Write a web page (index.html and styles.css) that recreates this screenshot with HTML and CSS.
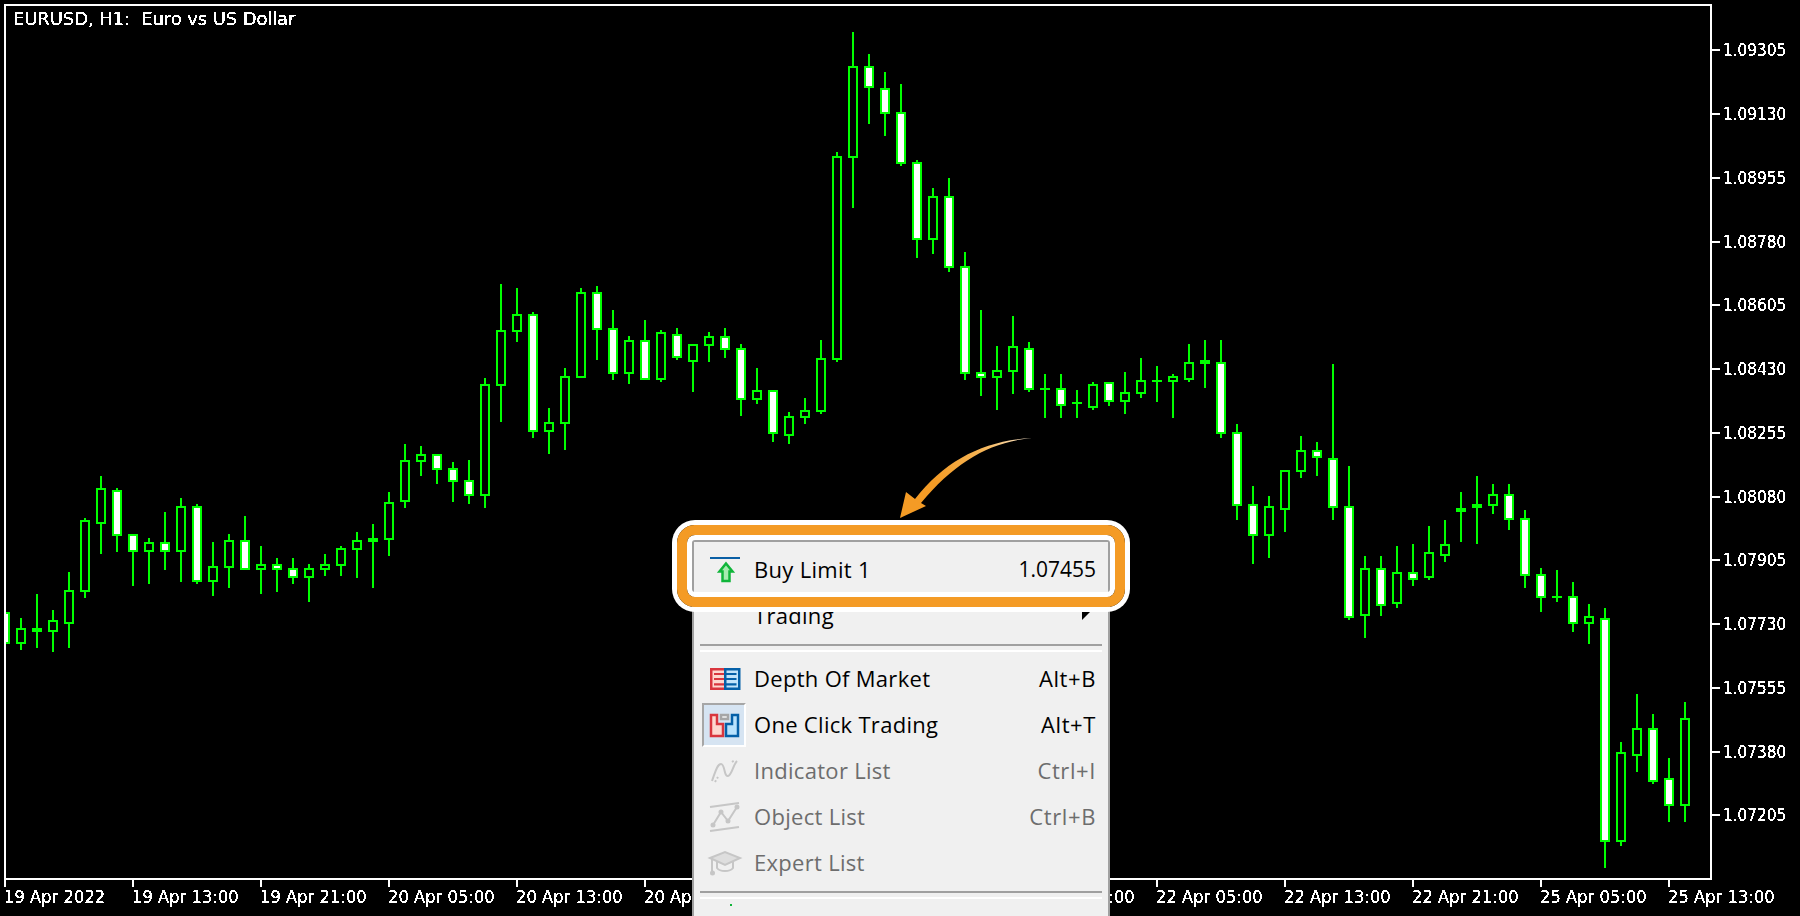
FILE: index.html
```html
<!DOCTYPE html>
<html lang="en">
<head>
<meta charset="utf-8">
<title>EURUSD, H1</title>
<link rel="stylesheet" href="styles.css">
</head>
<body>
<svg class="defs" width="0" height="0" aria-hidden="true">
  <filter id="bitmap-text" color-interpolation-filters="sRGB" x="0" y="0" width="100%" height="100%">
    <feComponentTransfer>
      <feFuncA type="discrete" tableValues="0 1 1"/>
    </feComponentTransfer>
  </filter>
</svg>
<main class="terminal">
  <section class="plot">
    <svg class="candles" id="candles" viewBox="6 6 1704 872" width="1704" height="872" shape-rendering="crispEdges"></svg>
    <h1 class="chart-title">EURUSD, H1:  Euro vs US Dollar</h1>
  </section>
  <ul class="price-axis">
    <li>1.09305</li><li>1.09130</li><li>1.08955</li><li>1.08780</li><li>1.08605</li><li>1.08430</li><li>1.08255</li>
    <li>1.08080</li><li>1.07905</li><li>1.07730</li><li>1.07555</li><li>1.07380</li><li>1.07205</li>
  </ul>
  <ul class="time-axis">
    <li>19 Apr 2022</li><li>19 Apr 13:00</li><li>19 Apr 21:00</li><li>20 Apr 05:00</li><li>20 Apr 13:00</li><li>20 Apr 21:00</li><li>21 Apr 05:00</li>
    <li>21 Apr 13:00</li><li>21 Apr 21:00</li><li>22 Apr 05:00</li><li>22 Apr 13:00</li><li>22 Apr 21:00</li><li>25 Apr 05:00</li><li>25 Apr 13:00</li>
  </ul>
</main>

<nav class="menu">
  <div class="row">
    <span class="icon"><svg viewBox="0 0 44 44"><rect x="8" y="9" width="30" height="2" fill="#0a5fa5"/><path d="M24 15.500 30.500 23.500H27.500V33H20.500V23.500H17.500Z" fill="#a6ecb0" stroke="#10b53a" stroke-width="2.500"/></svg></span>
    <span class="label">Buy Limit 1</span><span class="hint hint-price">1.07455</span>
  </div>
  <div class="row">
    <span class="icon"></span>
    <span class="label">Trading</span><span class="submenu-arrow"></span>
  </div>
  <div class="separator"></div>
  <div class="row">
    <span class="icon"><svg viewBox="0 0 44 44"><rect x="9.250" y="12.250" width="14" height="19.500" fill="#fdd8d0" stroke="#d9363e" stroke-width="2.500"/><rect x="23.250" y="12.250" width="14" height="19.500" fill="#c2e4fb" stroke="#0560a8" stroke-width="2.500"/><path d="M12 17H22M12 22H22M12 27.300H22" stroke="#d9363e" stroke-width="2.200"/><path d="M24 17H34.500M24 22H34.500M24 27.300H34.500" stroke="#0560a8" stroke-width="2.200"/></svg></span>
    <span class="label">Depth Of Market</span><span class="hint">Alt+B</span>
  </div>
  <div class="row">
    <span class="icon icon-active"><svg viewBox="0 0 44 44"><path d="M9 12H15V21H21V33H9Z" fill="#fdd8d0" stroke="#d9363e" stroke-width="2.500"/><path d="M36 12H30V21H24V33H36Z" fill="#b8e2fd" stroke="#0560a8" stroke-width="2.500"/><rect x="19" y="12" width="7" height="4" fill="#f2f2f2" stroke="#a6a6a6" stroke-width="2.500"/></svg></span>
    <span class="label">One Click Trading</span><span class="hint">Alt+T</span>
  </div>
  <div class="row row-disabled">
    <span class="icon"><svg viewBox="0 0 44 44" fill="none" stroke="#c6c6c6" stroke-width="2"><path d="M10 32C13 24 15 15 19 15S22 28 26 27 31 16 35 12"/><path d="M13 33 16 28M30 13 33 11" stroke-dasharray="2 2"/></svg></span>
    <span class="label">Indicator List</span><span class="hint">Ctrl+I</span>
  </div>
  <div class="row row-disabled">
    <span class="icon"><svg viewBox="0 0 44 44" fill="#c6c6c6" stroke="#c6c6c6" stroke-width="2"><path d="M8 12 37 8M8 36 37 32" fill="none"/><path d="M11 30 19 17 26 26 35 12" fill="none"/><circle cx="11" cy="30" r="1.500"/><circle cx="19" cy="17" r="1.500"/><circle cx="26" cy="26" r="1.500"/><circle cx="35" cy="12" r="1.500"/></svg></span>
    <span class="label">Object List</span><span class="hint">Ctrl+B</span>
  </div>
  <div class="row row-disabled">
    <span class="icon"><svg viewBox="0 0 44 44" fill="none" stroke="#c6c6c6" stroke-width="2"><path d="M8 17 23 11 38 17 23 24Z" fill="#dedede"/><path d="M15 21V27C18 31 28 31 31 27V21M10 17V30"/><circle cx="10.500" cy="32" r="1.500" fill="#c6c6c6"/></svg></span>
    <span class="label">Expert List</span>
  </div>
  <div class="separator"></div>
  <div class="row">
    <span class="icon"><svg viewBox="0 0 44 44"><rect x="28" y="0" width="2" height="2" fill="#10b53a"/></svg></span>
  </div>
</nav>

<div class="callout"></div>

<svg class="pointer" viewBox="0 0 140 90" width="140" height="90">
  <defs>
    <linearGradient id="pointer-fade" gradientUnits="userSpaceOnUse" x1="132" y1="8" x2="40" y2="60">
      <stop offset="0" stop-color="#fbe9d2"/>
      <stop offset="0.45" stop-color="#f6b658"/>
      <stop offset="1" stop-color="#f49b25"/>
    </linearGradient>
  </defs>
  <path d="M0 88 6 62 15 69C45 30 85 10 132 8 90 12 55 32 21 73L26 76Z" fill="url(#pointer-fade)"/>
</svg>

<script src="chart.js"></script>
</body>
</html>
```

FILE: styles.css
```css
* { box-sizing: border-box; }

html, body {
  margin: 0;
  height: 916px;
  overflow: hidden;
  background: #000;
}

body { position: relative; }

.defs { position: absolute; }

.terminal {
  display: grid;
  grid-template-columns: 1708px 88px;
  grid-template-rows: 876px 36px;
  padding: 4px 0 0 4px;
  color: #fff;
  font-family: "DejaVu Sans", sans-serif;
  font-size: 17px;
  font-stretch: condensed;
}

.plot {
  position: relative;
  border: 2px solid #fff;
  overflow: hidden;
}

.candles { display: block; }

.chart-title {
  position: absolute;
  left: 7px;
  top: 2px;
  margin: 0;
  font: inherit;
  font-size: 18px;
  font-stretch: normal;
  letter-spacing: -0.1px;
  line-height: 22px;
  white-space: pre;
  filter: url(#bitmap-text);
}

.price-axis, .time-axis {
  list-style: none;
  margin: 0;
  padding: 0;
}

.price-axis {
  display: grid;
  grid-auto-rows: 63.75px;
  padding-top: 14.5px;
  filter: url(#bitmap-text);
}

.price-axis li {
  display: flex;
  align-items: center;
  gap: 3px;
}

.price-axis li::before {
  content: "";
  flex: none;
  width: 8px;
  height: 2px;
  background: #fff;
}

.time-axis {
  grid-column: 1 / -1;
  display: flex;
  font-size: 18px;
  letter-spacing: 0.1px;
  filter: url(#bitmap-text);
}

.time-axis li {
  flex: 0 0 128px;
  white-space: nowrap;
  line-height: 18px;
}

.time-axis li::before {
  content: "";
  display: block;
  width: 2px;
  height: 7px;
  margin-bottom: 1px;
  background: #fff;
}

.menu {
  position: absolute;
  left: 692px;
  top: 540px;
  width: 418px;
  height: 400px;
  padding: 5px 12px 0 8px;
  background: #f0f0f0;
  border: 2px solid #a0a0a0;
  color: #000;
  font-family: "Open Sans", sans-serif;
  font-size: 22px;
  letter-spacing: 0.3px;
}

.row {
  display: flex;
  align-items: center;
  height: 46px;
}

.row-disabled { color: #6d6d6d; }

.icon {
  flex: none;
  width: 44px;
  height: 44px;
  margin-right: 8px;
}

.icon svg {
  display: block;
  width: 44px;
  height: 44px;
}

.icon-active {
  background: #d6e4f2;
  border-style: solid;
  border-width: 2px;
  border-color: #a6a6a6 #fff #fff #a6a6a6;
}

.icon-active svg {
  margin: -2px;
}

.label {
  flex: 1;
  padding-bottom: 2px;
}

.hint {
  padding-bottom: 2px;
  letter-spacing: 0.6px;
}

.hint-price {
  font-size: 21px;
  letter-spacing: 0;
}

.submenu-arrow {
  width: 0;
  height: 0;
  margin: 0 6px 8px 0;
  border-left: 8px solid #000;
  border-top: 8px solid transparent;
  border-bottom: 8px solid transparent;
}

.separator {
  height: 17px;
  margin: 0 -6px 0 -2px;
  padding-top: 5px;
}

.separator::before {
  content: "";
  display: block;
  height: 4px;
  border-top: 2px solid #a0a0a0;
  border-bottom: 2px solid #fff;
}

.callout {
  position: absolute;
  left: 677px;
  top: 525px;
  width: 448px;
  height: 82px;
  border: 10px solid #f49b25;
  border-radius: 18px;
  box-shadow: 0 0 0 5px #fff, inset 0 0 0 5px #fff;
}

.pointer {
  position: absolute;
  left: 900px;
  top: 430px;
}
```

FILE: chart.js
```js
// [high, body top, body bottom, low, filled]
var bars = [
[612,612,644,644,1],[618,628,644,650,0],[594,628,632,648,0],[610,620,632,652,0],[572,590,624,648,0],[518,520,592,598,0],
[476,488,524,554,0],[488,490,536,552,1],[534,534,552,586,1],[538,542,552,584,0],[512,542,552,570,1],[498,506,552,582,0],
[504,506,582,584,1],[542,566,582,596,0],[534,540,568,588,0],[516,540,570,570,1],[546,564,570,594,0],[558,564,570,592,1],
[558,568,578,584,1],[564,568,578,602,0],[554,564,570,576,0],[546,548,566,576,0],[532,540,550,578,0],[524,538,542,588,0],
[492,502,540,556,0],[444,460,502,508,0],[446,454,462,476,0],[454,454,470,484,1],[462,468,482,502,1],[460,480,496,504,1],
[378,384,496,508,0],[284,330,386,422,0],[288,314,332,342,0],[312,314,432,438,1],[408,422,432,454,0],[368,376,424,450,0],
[288,292,378,378,0],[286,292,330,360,1],[310,328,374,380,1],[336,340,374,384,0],[320,340,380,380,1],[330,332,380,382,0],
[328,334,358,360,1],[344,344,362,392,0],[332,336,346,362,0],[328,336,350,358,1],[344,348,400,416,1],[368,390,400,404,0],
[390,390,434,442,1],[412,416,436,444,0],[398,410,418,424,0],[340,358,412,414,0],[152,156,360,362,0],[32,66,158,208,0],
[54,66,88,124,1],[72,88,114,136,1],[84,112,164,166,1],[160,162,240,258,1],[188,196,240,254,0],[178,196,268,272,1],
[252,266,374,380,1],[310,372,378,396,1],[346,370,378,410,0],[316,346,372,394,0],[342,348,390,392,1],[374,388,390,418,0],
[374,388,406,418,1],[390,402,404,418,0],[382,384,408,410,0],[382,382,402,406,1],[372,392,402,414,0],[358,380,394,398,0],
[366,380,382,402,0],[374,376,382,418,0],[344,362,380,382,0],[340,360,364,388,0],[340,362,434,438,1],[424,432,506,520,1],
[486,504,536,564,1],[496,506,536,558,0],[470,470,510,532,0],[436,450,472,478,0],[442,450,458,476,1],[364,458,508,520,1],
[466,506,618,620,1],[556,568,616,638,0],[556,568,606,616,1],[546,572,604,608,0],[544,572,580,586,1],[526,552,578,580,0],
[520,544,556,562,0],[492,508,512,542,0],[476,504,508,544,0],[484,494,506,514,0],[484,494,520,530,1],[510,518,576,588,1],
[568,574,598,612,1],[570,596,598,602,0],[582,596,624,632,1],[604,616,624,644,0],[608,618,842,868,1],[742,752,842,846,0],
[694,728,756,772,0],[714,728,782,784,1],[758,778,806,822,1],[702,718,806,822,0]
];

var svg = document.getElementById("candles");
var NS = "http://www.w3.org/2000/svg";

function rect(x, y, w, h, fill) {
  var r = document.createElementNS(NS, "rect");
  r.setAttribute("x", x);
  r.setAttribute("y", y);
  r.setAttribute("width", w);
  r.setAttribute("height", h);
  r.setAttribute("fill", fill);
  svg.appendChild(r);
}

bars.forEach(function (b, k) {
  var cx = 5 + 16 * k;
  rect(cx - 1, b[0], 2, b[3] - b[0], "#00ff00");
  rect(cx - 5, b[1], 10, b[2] - b[1], "#00ff00");
  if (b[2] - b[1] > 4) {
    rect(cx - 3, b[1] + 2, 6, b[2] - b[1] - 4, b[4] ? "#fff" : "#000");
  }
});
```
